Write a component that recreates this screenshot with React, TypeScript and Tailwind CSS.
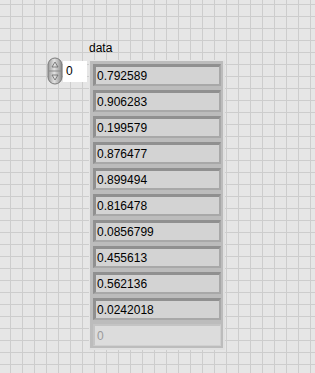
import React from 'react';

const values = [
  '0.792589',
  '0.906283',
  '0.199579',
  '0.876477',
  '0.899494',
  '0.816478',
  '0.0856799',
  '0.455613',
  '0.562136',
  '0.0242018',
];

const Cell = ({ value, disabled }: { value: string; disabled?: boolean }) =>
  disabled ? (
    <div className="h-[22px] border-t-2 border-l-2 border-t-[#c4c4c4] border-l-[#c4c4c4] border-b border-r border-b-[#d0d0d0] border-r-[#d0d0d0] bg-[#dcdcdc] flex items-center pl-[2px] text-[12px] text-[#9a9a9a]">
      {value}
    </div>
  ) : (
    <div className="h-[22px] border-t-[3px] border-l-[3px] border-t-[#909090] border-l-[#909090] border-b-2 border-r-2 border-b-[#a8a8a8] border-r-[#a8a8a8] bg-[#d3d3d3] flex items-center pl-[1px] text-[12px] text-black">
      {value}
    </div>
  );

const Spinner = () => (
  <svg width="16" height="28" viewBox="0 0 16 28">
    <defs>
      <linearGradient id="spin" x1="0" y1="0" x2="1" y2="0">
        <stop offset="0" stopColor="#9a9a9a" />
        <stop offset="0.45" stopColor="#e2e2e2" />
        <stop offset="1" stopColor="#8a8a8a" />
      </linearGradient>
    </defs>
    <rect x="1" y="1" width="14" height="26" rx="7" fill="url(#spin)" stroke="#7a7a7a" />
    <line x1="2" y1="14" x2="14" y2="14" stroke="#8a8a8a" />
    <path d="M8 5 L5 10 L11 10 Z" fill="none" stroke="#6a6a6a" strokeWidth="0.8" />
    <path d="M8 23 L5 18 L11 18 Z" fill="none" stroke="#6a6a6a" strokeWidth="0.8" />
  </svg>
);

export default function App() {
  return (
    <div
      className="relative w-[315px] h-[373px] overflow-hidden bg-[#e6e6e6] bg-[linear-gradient(to_right,#cdcdcd_1px,transparent_1px),linear-gradient(to_bottom,#cdcdcd_1px,transparent_1px)] bg-[size:12px_12px] bg-[position:10px_4px]"
      style={{ fontFamily: '"Liberation Sans", Arial, sans-serif' }}
    >
      <div className="absolute left-[89px] top-[39px] text-[12px] text-black">data</div>

      <div className="absolute left-[47px] top-[57px] flex items-center">
        <Spinner />
        <div className="w-[24px] h-[21px] bg-white flex items-center pl-[3px] text-[12px] text-black">0</div>
      </div>

      <div className="absolute left-[89px] top-[60px] w-[136px] h-[290px] bg-[#bcbcbc] border-t border-l border-t-[#e4e4e4] border-l-[#e4e4e4] border-b-2 border-r-2 border-b-[#e0e0e0] border-r-[#e0e0e0] pt-[3px] pl-[3px] pr-[2px] flex flex-col gap-[4px]">
        {values.map((v) => (
          <Cell key={v} value={v} />
        ))}
        <Cell value="0" disabled />
      </div>
    </div>
  );
}
